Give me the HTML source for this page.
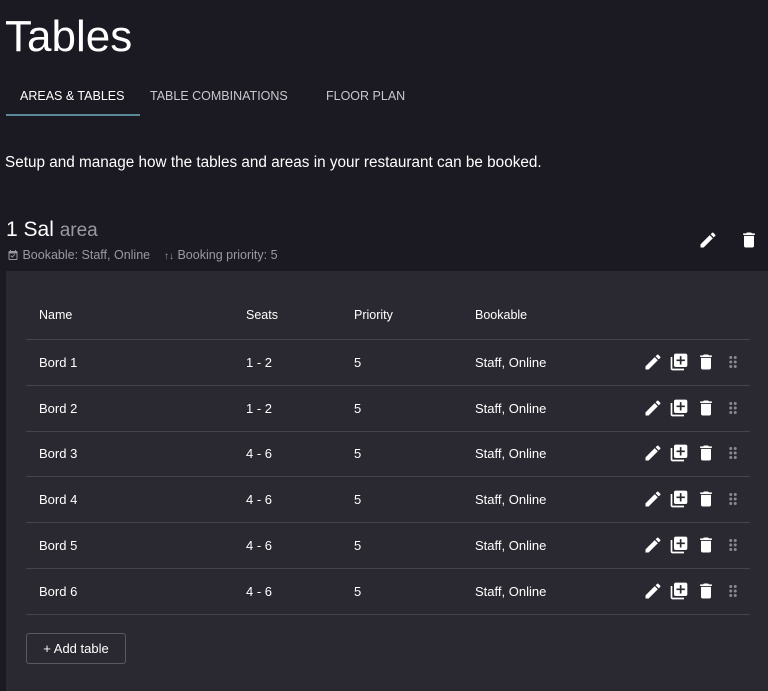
<!DOCTYPE html><html><head><style>
body{margin:0;background:#1b1921;font-family:"Liberation Sans",sans-serif;color:#fff;width:768px;height:679px;overflow:hidden;position:relative}
.a{position:absolute}
.tab{position:absolute;top:89px;font-size:12.5px;color:#c8c8cc}
.panel{position:absolute;left:6px;top:271px;width:762px;height:420px;background:#2a2830}
.row{position:absolute;left:26px;width:724px;height:45px;border-bottom:1px solid #45434b;font-size:13px}
.row span{position:absolute;top:15px}
.ic{position:absolute;top:12px}
</style></head><body>
<div class="a" style="left:5px;top:12px;font-size:44px">Tables</div>
<div class="tab" style="left:20px;color:#fff">AREAS &amp; TABLES</div>
<div class="tab" style="left:150px">TABLE COMBINATIONS</div>
<div class="tab" style="left:326px">FLOOR PLAN</div>
<div class="a" style="left:6px;top:114px;width:134px;height:2px;background:#5a8a9a"></div>
<div class="a" style="left:5px;top:154px;font-size:15.3px">Setup and manage how the tables and areas in your restaurant can be booked.</div>
<div class="a" style="left:6px;top:218px;font-size:21px">1 Sal <span style="color:#9a98a0;font-size:19px">area</span></div>
<div class="a" style="left:7px;top:248px;font-size:12.5px;color:#9a98a0">
<svg width="12" height="12" viewBox="0 0 24 24" style="vertical-align:-2px"><path fill="#9a98a0" d="M19 4h-1V2h-2v2H8V2H6v2H5c-1.1 0-2 .9-2 2v14c0 1.1.9 2 2 2h14c1.1 0 2-.9 2-2V6c0-1.1-.9-2-2-2zm0 16H5V9h14v11zm-8.5-2.5L7 14l1.4-1.4 2.1 2.1 4.6-4.6L16.5 11z"/></svg> Bookable: Staff, Online &nbsp;&nbsp;&nbsp;<span style="font-size:10px">↑↓</span> Booking priority: 5</div>
<svg class="a" style="left:698px;top:230px" width="20" height="20" viewBox="0 0 24 24"><path fill="#fff" d="M3 17.25V21h3.75L17.81 9.94l-3.750-3.75L3 17.25zM20.71 7.04a1 1 0 000-1.41l-2.34-2.34a1 1 0 00-1.41 0l-1.83 1.83 3.75 3.75 1.83-1.83z"/></svg>
<svg class="a" style="left:739px;top:230px" width="20" height="20" viewBox="0 0 24 24"><path fill="#fff" d="M6 19c0 1.1.9 2 2 2h8c1.1 0 2-.9 2-2V7H6v12zM19 4h-3.5l-1-1h-5l-1 1H5v2h14V4z"/></svg>
<div class="panel"></div>
<div class="row" style="top:294px;font-size:12.5px"><span style="left:13px;top:14px">Name</span><span style="left:220px;top:14px">Seats</span><span style="left:328px;top:14px">Priority</span><span style="left:449px;top:14px">Bookable</span></div>
<div id="rows"></div>
<div class="a" style="left:26px;top:633px;width:100px;height:31px;border:1px solid #5a5860;border-radius:3px;box-sizing:border-box;font-size:13px;line-height:30px;text-align:center">+ Add table</div>
<script>
var d=[["Bord 1","1 - 2"],["Bord 2","1 - 2"],["Bord 3","4 - 6"],["Bord 4","4 - 6"],["Bord 5","4 - 6"],["Bord 6","4 - 6"]],h="";
d.forEach(function(r,i){var t=340+i*45.7;
h+='<div class="row" style="top:'+t+'px"><span style="left:13px">'+r[0]+'</span><span style="left:220px">'+r[1]+'</span><span style="left:328px">5</span><span style="left:449px">Staff, Online</span>'+
'<svg class="ic" style="left:617px" width="20" height="20" viewBox="0 0 24 24"><path fill="#fff" d="M3 17.25V21h3.75L17.81 9.94l-3.75-3.75L3 17.25zM20.71 7.04a1 1 0 000-1.41l-2.34-2.34a1 1 0 00-1.41 0l-1.83 1.83 3.75 3.75 1.83-1.83z"/></svg>'+
'<svg class="ic" style="left:643px" width="20" height="20" viewBox="0 0 24 24"><path fill="#fff" d="M4 6H2v14c0 1.1.9 2 2 2h14v-2H4V6zm16-4H8c-1.1 0-2 .9-2 2v12c0 1.1.9 2 2 2h12c1.1 0 2-.9 2-2V4c0-1.1-.9-2-2-2zm-1 9h-4v4h-2v-4H9V9h4V5h2v4h4v2z"/></svg>'+
'<svg class="ic" style="left:670px" width="20" height="20" viewBox="0 0 24 24"><path fill="#fff" d="M6 19c0 1.1.9 2 2 2h8c1.1 0 2-.9 2-2V7H6v12zM19 4h-3.5l-1-1h-5l-1 1H5v2h14V4z"/></svg>'+
'<svg class="ic" style="left:698px" width="18" height="20" viewBox="0 0 24 24"><path fill="#8a8890" d="M11 18a2 2 0 11-4 0 2 2 0 014 0zm-2-8a2 2 0 100 4 2 2 0 000-4zm0-6a2 2 0 100 4 2 2 0 000-4zm6 4a2 2 0 100-4 2 2 0 000 4zm0 2a2 2 0 100 4 2 2 0 000-4zm0 6a2 2 0 100 4 2 2 0 000-4z"/></svg></div>';});
document.getElementById("rows").innerHTML=h;
</script>
</body></html>
